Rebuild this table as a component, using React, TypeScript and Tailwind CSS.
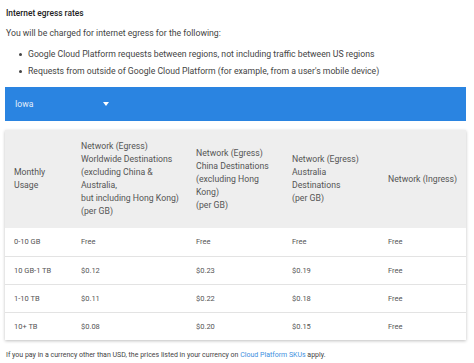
import React from "react";

const rows = [
  ["0-10 GB", "Free", "Free", "Free", "Free"],
  ["10 GB-1 TB", "$0.12", "$0.23", "$0.19", "Free"],
  ["1-10 TB", "$0.11", "$0.22", "$0.18", "Free"],
  ["10+ TB", "$0.08", "$0.20", "$0.15", "Free"],
];

export default function App() {
  return (
    <div
      className="w-[474px] h-[363px] bg-white text-[#444] overflow-hidden"
      style={{ fontFamily: "Roboto, 'Liberation Sans', sans-serif" }}
    >
      <div className="pl-[6px] pr-[8px] pt-[6px]">
        <div className="text-[8.4px] leading-[14px] font-medium text-[#222]">Internet egress rates</div>
        <div className="mt-[6px] text-[8.7px] leading-[14px] text-[#444]">
          You will be charged for internet egress for the following:
        </div>
        <ul className="mt-[7px] flex flex-col gap-[3px] text-[8.7px] leading-[14px] text-[#444]">
          <li className="flex items-center">
            <span className="w-[3px] h-[3px] rounded-full bg-[#444] ml-[13px] mr-[6px]" />
            Google Cloud Platform requests between regions, not including traffic between US regions
          </li>
          <li className="flex items-center">
            <span className="w-[3px] h-[3px] rounded-full bg-[#444] ml-[13px] mr-[6px]" />
            Requests from outside of Google Cloud Platform (for example, from a user's mobile device)
          </li>
        </ul>
        <div className="mt-[9px] ml-[-1px] w-[461px] h-[34px] bg-[#2a84e1] flex items-center pl-[10px] text-[8.6px]">
          <span className="w-[88px] text-[#e3eefb]">Iowa</span>
          <svg width="6" height="4" viewBox="0 0 6 4">
            <polygon points="0,0 6,0 3,4" fill="#ffffff" />
          </svg>
        </div>
        <div className="mt-[9px] ml-[-1px] w-[461px] bg-white shadow-[0_1px_3px_rgba(0,0,0,0.25)]">
          <table className="w-full table-fixed border-collapse text-[7.5px] leading-[13px] text-[#555]">
            <colgroup>
              <col className="w-[67px]" />
              <col className="w-[115px]" />
              <col className="w-[96px]" />
              <col className="w-[96px]" />
              <col className="w-[87px]" />
            </colgroup>
            <thead className="text-[8.7px]">
              <tr className="bg-[#eeeeee] h-[98px]">
                <th className="font-normal text-left align-middle pl-[9px]">Monthly<br />Usage</th>
                <th className="font-normal text-left align-middle pl-[9px]">
                  Network (Egress)<br />Worldwide Destinations<br />(excluding China &amp;<br />Australia,<br />but including Hong Kong)<br />(per GB)
                </th>
                <th className="font-normal text-left align-middle pl-[9px]">
                  Network (Egress)<br />China Destinations<br />(excluding Hong<br />Kong)<br />(per GB)
                </th>
                <th className="font-normal text-left align-middle pl-[9px]">
                  Network (Egress)<br />Australia<br />Destinations<br />(per GB)
                </th>
                <th className="font-normal text-left align-middle pl-[9px]">Network (Ingress)</th>
              </tr>
            </thead>
            <tbody>
              {rows.map((r, i) => (
                <tr key={i} className={`h-[28px] ${i < rows.length - 1 ? "border-b border-[#e3e3e3]" : ""}`}>
                  {r.map((c, j) => (
                    <td key={j} className="pl-[9px] align-middle">{c}</td>
                  ))}
                </tr>
              ))}
            </tbody>
          </table>
        </div>
        <div className="mt-[9px] text-[7px] leading-[12px] text-[#444]">
          If you pay in a currency other than USD, the prices listed in your currency on{" "}
          <span className="text-[#3d8fe0]">Cloud Platform SKUs</span> apply.
        </div>
      </div>
    </div>
  );
}
